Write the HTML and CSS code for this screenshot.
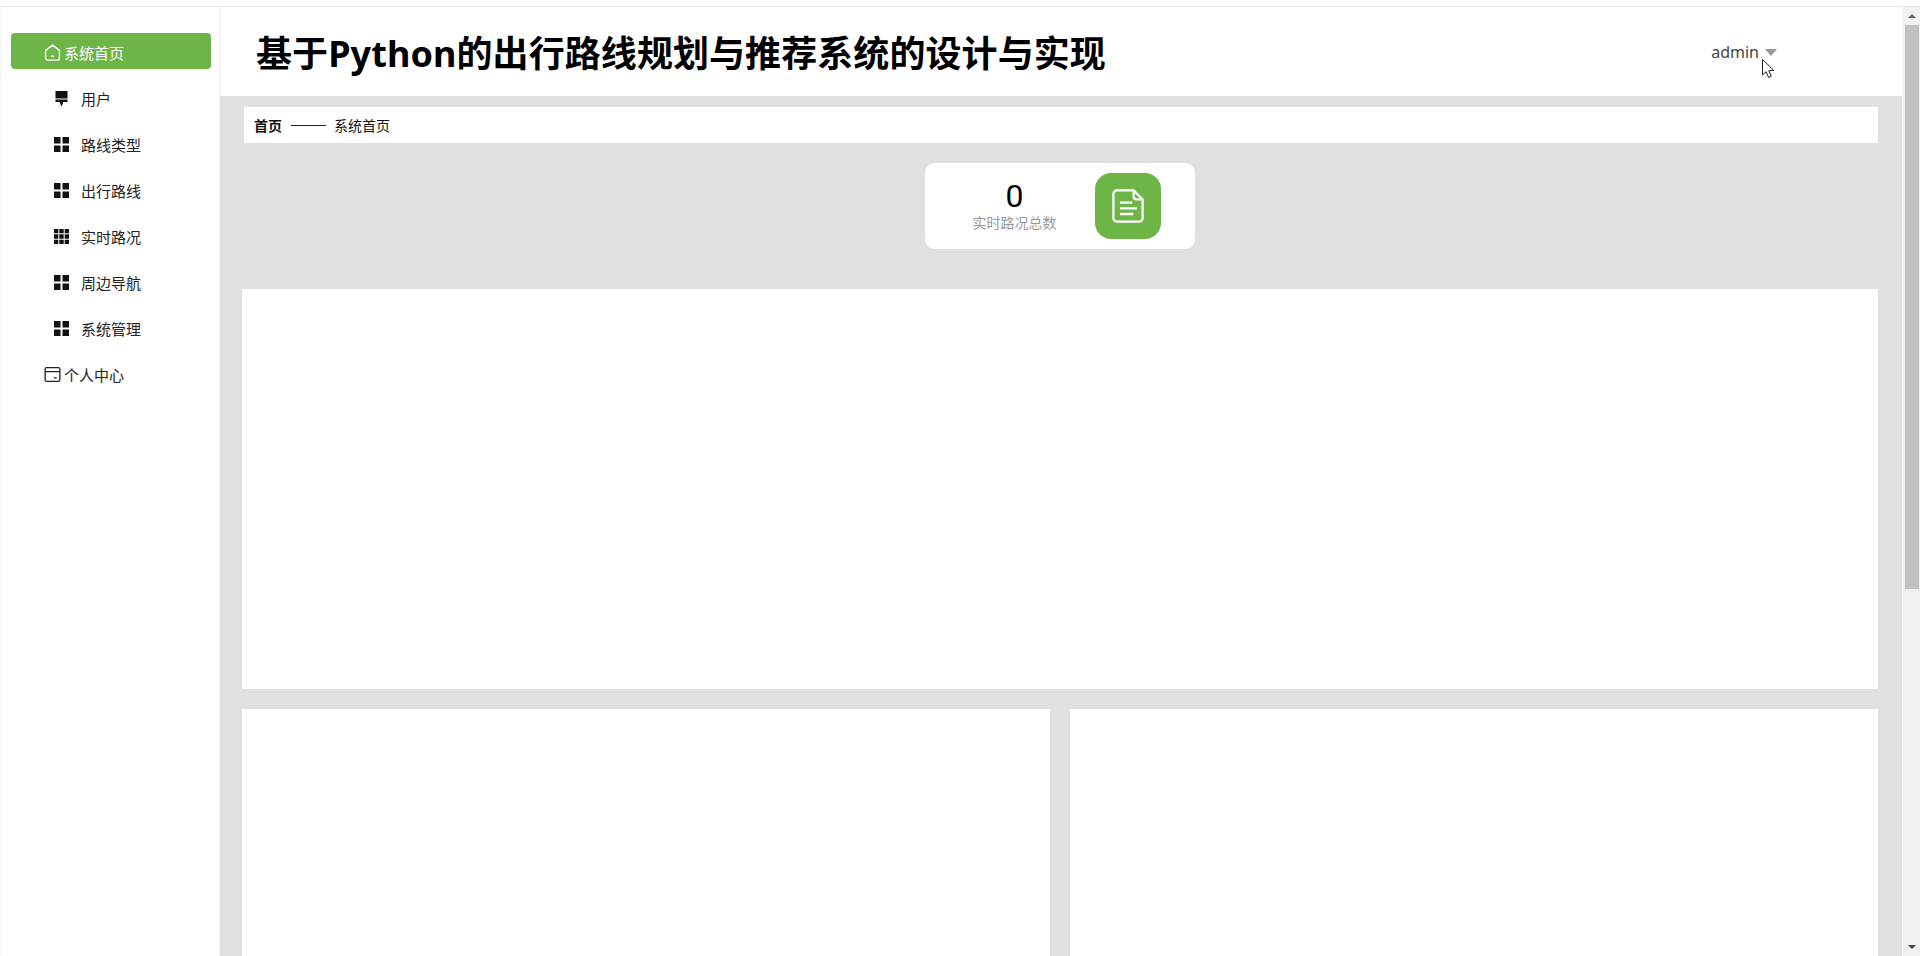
FILE: index.html
```html
<!DOCTYPE html>
<html lang="zh">
<head>
<meta charset="utf-8">
<title>基于Python的出行路线规划与推荐系统的设计与实现</title>
<link rel="stylesheet" href="styles.css">
</head>
<body>
<div class="app">
  <aside class="sidebar">
    <a class="item top active">
      <svg class="ico-line" viewBox="0 0 18 18"><path d="M9 1.200 16.300 6.800V15a2 2 0 0 1-2 2H3.700a2 2 0 0 1-2-2V6.800zM7.500 13h3"/></svg>
      <span>系统首页</span>
    </a>
    <a class="item sub">
      <svg class="ico" viewBox="0 0 15 15"><path d="M1.500 0h12v7.500h-12zM1.500 8.500h12V11H9v1l-1.200 3h-.6L6 12v-1H1.500z"/></svg>
      <span>用户</span>
    </a>
    <a class="item sub">
      <svg class="ico" viewBox="0 0 15 15"><path d="M0 0h6.500v6.500H0zM8.500 0H15v6.500H8.500zM0 8.500h6.500V15H0zM8.500 8.500H15V15H8.500z"/></svg>
      <span>路线类型</span>
    </a>
    <a class="item sub">
      <svg class="ico" viewBox="0 0 15 15"><path d="M0 0h6.500v6.500H0zM8.500 0H15v6.500H8.500zM0 8.500h6.500V15H0zM8.500 8.500H15V15H8.500z"/></svg>
      <span>出行路线</span>
    </a>
    <a class="item sub">
      <svg class="ico" viewBox="0 0 15 15"><path d="M0 0h4.300v4.300H0zM5.300 0h4.400v4.300H5.300zM10.700 0H15v4.300h-4.300zM0 5.300h4.300v4.400H0zM5.300 5.300h4.400v4.400H5.300zM10.700 5.300H15v4.400h-4.300zM0 10.700h4.300V15H0zM5.300 10.700h4.400V15H5.300zM10.700 10.700H15V15h-4.300z"/></svg>
      <span>实时路况</span>
    </a>
    <a class="item sub">
      <svg class="ico" viewBox="0 0 15 15"><path d="M0 0h6.500v6.500H0zM8.500 0H15v6.500H8.500zM0 8.500h6.500V15H0zM8.500 8.500H15V15H8.500z"/></svg>
      <span>周边导航</span>
    </a>
    <a class="item sub">
      <svg class="ico" viewBox="0 0 15 15"><path d="M0 0h6.500v6.500H0zM8.500 0H15v6.500H8.500zM0 8.500h6.500V15H0zM8.500 8.500H15V15H8.500z"/></svg>
      <span>系统管理</span>
    </a>
    <a class="item top">
      <svg class="ico-line" viewBox="0 0 18 18"><rect x="1.200" y="1.800" width="15.600" height="14.400" rx="1.500"/><path d="M1.200 6h15.600M10.500 12.500h3"/></svg>
      <span>个人中心</span>
    </a>
  </aside>
  <div class="main">
    <header class="header">
      <h1 class="title">基于Python的出行路线规划与推荐系统的设计与实现</h1>
      <div class="user"><span>admin</span><i class="caret"></i></div>
      <svg class="cursor" viewBox="0 0 13 20"><path d="M.5.500v15.500l3.700-3.300 2.400 5.800 2.700-1.200-2.500-5.600 5-.300z"/></svg>
    </header>
    <div class="content">
      <nav class="crumb"><b>首页</b><i class="dash"></i><span>系统首页</span></nav>
      <div class="stat-row">
        <div class="stat">
          <div class="stat-text">
            <div class="stat-num">0</div>
            <div class="stat-label">实时路况总数</div>
          </div>
          <div class="stat-icon">
            <svg viewBox="0 0 34 36"><path d="M5 1.500h18l9.500 9.500v20a3.500 3.500 0 0 1-3.500 3.500H5A3.500 3.500 0 0 1 1.500 31V5A3.500 3.500 0 0 1 5 1.500z"/><path d="M23 1.500V8a3 3 0 0 0 3 3h6.500M8.500 14.500h13M8.500 20.500h18M8.500 26.500h14"/></svg>
          </div>
        </div>
      </div>
      <section class="panel wide"></section>
      <div class="panels">
        <section class="panel half"></section>
        <section class="panel half"></section>
      </div>
    </div>
  </div>
  <div class="scrollbar">
    <i class="arrow up"></i>
    <div class="track"><div class="thumb"></div></div>
    <i class="arrow down"></i>
  </div>
</div>
</body>
</html>
```
FILE: styles.css
```css
* { box-sizing: border-box; }
html, body { margin: 0; height: 956px; overflow: hidden; background: #fff; }
body {
  padding-top: 6px;
  font-family: "Noto Sans CJK SC", "Noto Sans", sans-serif;
  color: #111;
}
.app {
  display: flex;
  height: 950px;
  border-top: 1px solid #e3e3e3;
  overflow: hidden;
}
.sidebar {
  flex: 0 0 220px;
  padding: 26px 8px 0 10px;
  background: #fff;
  border-left: 1px solid #f3f3f3;
  border-right: 1px solid #f1f1f1;
  display: flex;
  flex-direction: column;
  gap: 10px;
}
.item {
  display: flex;
  align-items: center;
  height: 36px;
  flex: none;
  padding-top: 4px;
  font-size: 15px;
  line-height: 32px;
  color: #222;
}
.item.top { padding-left: 33px; gap: 3px; }
.item.top .ico-line { margin-top: -2px; }
.item.sub { padding-left: 43px; gap: 12px; }
.item.active { background: #6eb548; color: #fff; border-radius: 4px; }
.ico { width: 15px; height: 15px; fill: #111; flex: none; margin-top: -2px; }
.ico-line {
  width: 17px;
  height: 17px;
  flex: none;
  fill: none;
  stroke: currentColor;
  stroke-width: 1.400;
}
.main { flex: 1 1 auto; min-width: 0; display: flex; flex-direction: column; }
.header {
  flex: 0 0 89px;
  position: relative;
  display: flex;
  align-items: center;
  justify-content: space-between;
  padding: 0 125px 0 36px;
  background: #fff;
}
.title {
  margin: 4px 0 0;
  font-family: "Noto Sans", "Noto Sans CJK SC", sans-serif;
  font-size: 36px;
  line-height: 46px;
  font-weight: 700;
  letter-spacing: .08px;
  color: #000;
  white-space: nowrap;
}
.user {
  display: flex;
  align-items: center;
  gap: 6px;
  font-family: "Noto Sans", sans-serif;
  font-size: 16px;
  line-height: 22px;
  color: #444;
}
.caret {
  width: 0;
  height: 0;
  margin-top: 2px;
  border: 6px solid transparent;
  border-top: 7px solid #999;
  border-bottom: 0;
}
.cursor {
  position: absolute;
  left: 1542px;
  top: 52px;
  width: 13px;
  height: 20px;
  fill: #fff;
  stroke: #222;
  stroke-width: 1;
}
.content {
  flex: 1 1 auto;
  background: #e0e0e0;
  padding: 11px 24px 0 22px;
  overflow: hidden;
}
.crumb {
  display: flex;
  align-items: center;
  height: 36px;
  margin-left: 2px;
  padding-left: 10px;
  background: #fff;
  font-size: 14px;
  color: #111;
}
.crumb b { font-weight: 700; font-size: 14px; }
.dash { width: 35px; height: 1px; margin: 0 8px 0 9px; background: #222; }
.stat-row { display: flex; justify-content: center; margin-top: 20px; padding-right: 1px; }
.stat {
  display: flex;
  align-items: center;
  width: 270px;
  height: 86px;
  padding-left: 45px;
  background: #fff;
  border-radius: 10px;
}
.stat-text { width: 90px; text-align: center; margin: -2px 35px 0 0; flex: none; }
.stat-num { font-family: "Roboto", sans-serif; font-size: 32px; line-height: 34px; color: #000; }
.stat-label { font-size: 14px; line-height: 18px; color: #999; white-space: nowrap; }
.stat-icon {
  display: flex;
  align-items: center;
  justify-content: center;
  width: 66px;
  height: 66px;
  flex: none;
  background: #6eb548;
  border-radius: 16px;
}
.stat-icon svg {
  width: 32px;
  height: 36px;
  fill: none;
  stroke: #fff;
  stroke-width: 2.400;
}
.panel { background: #fff; }
.wide { height: 400px; margin-top: 40px; }
.panels { display: flex; gap: 20px; margin-top: 20px; }
.half { flex: 1 1 0; height: 400px; }
.scrollbar {
  flex: 0 0 18px;
  display: flex;
  flex-direction: column;
  align-items: center;
  background: #f1f1f1;
  border-left: 1px solid #fafafa;
}
.arrow { flex: none; width: 0; height: 0; margin: 7px 0; border: 4px solid transparent; }
.arrow.up { border-bottom: 4px solid #666; border-top: 0; }
.arrow.down { border-top: 4px solid #444; border-bottom: 0; }
.track { flex: 1 1 auto; width: 100%; padding: 0 1px 0 2px; }
.thumb { height: 564px; background: #c1c1c1; }
```
